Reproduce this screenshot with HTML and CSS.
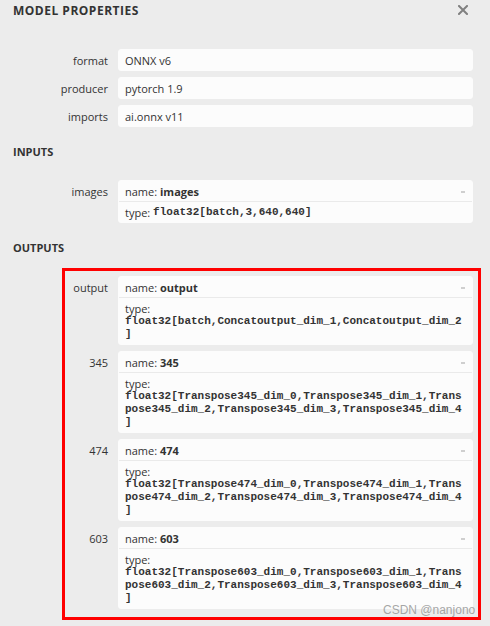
FILE: index.html
```html
<!DOCTYPE html>
<html>
<head>
<meta charset="utf-8">
<link rel="stylesheet" href="styles.css">
</head>
<body>
<div class="sidebar">
  <div class="header">
    <div class="title">MODEL PROPERTIES</div>
    <svg class="close" width="10" height="10" viewBox="0 0 10 10"><path d="M1 1L9 9M9 1L1 9" stroke="#808080" stroke-width="2" stroke-linecap="square"/></svg>
  </div>
  <div class="list props">
    <div class="item"><div class="label">format</div><div class="value"><div class="line">ONNX v6</div></div></div>
    <div class="item"><div class="label">producer</div><div class="value"><div class="line">pytorch 1.9</div></div></div>
    <div class="item"><div class="label">imports</div><div class="value"><div class="line">ai.onnx v11</div></div></div>
  </div>
  <div class="section-title">INPUTS</div>
  <div class="list">
    <div class="item"><div class="label">images</div><div class="value"><div class="line name"><span>name: <b>images</b></span><span class="toggle"></span></div><div class="line sep">type: <code>float32[batch,3,640,640]</code></div></div></div>
  </div>
  <div class="section-title">OUTPUTS</div>
  <div class="list">
    <div class="item"><div class="label">output</div><div class="value"><div class="line name"><span>name: <b>output</b></span><span class="toggle"></span></div><div class="line sep">type: <code>float32[batch,Concatoutput_dim_1,Concatoutput_dim_2]</code></div></div></div>
    <div class="item"><div class="label">345</div><div class="value"><div class="line name"><span>name: <b>345</b></span><span class="toggle"></span></div><div class="line sep">type: <code>float32[Transpose345_dim_0,Transpose345_dim_1,Transpose345_dim_2,Transpose345_dim_3,Transpose345_dim_4]</code></div></div></div>
    <div class="item"><div class="label">474</div><div class="value"><div class="line name"><span>name: <b>474</b></span><span class="toggle"></span></div><div class="line sep">type: <code>float32[Transpose474_dim_0,Transpose474_dim_1,Transpose474_dim_2,Transpose474_dim_3,Transpose474_dim_4]</code></div></div></div>
    <div class="item"><div class="label">603</div><div class="value"><div class="line name"><span>name: <b>603</b></span><span class="toggle"></span></div><div class="line sep">type: <code>float32[Transpose603_dim_0,Transpose603_dim_1,Transpose603_dim_2,Transpose603_dim_3,Transpose603_dim_4]</code></div></div></div>
  </div>
</div>
<div class="annotation"></div>
<div class="watermark">CSDN @nanjono</div>
</body>
</html>
```
FILE: styles.css
```css
html, body {
  margin: 0;
  background: #ececec;
}
body {
  font-family: "Open Sans", "Noto Sans", sans-serif;
  font-size: 11px;
  color: #333;
  position: relative;
  width: 490px;
  height: 626px;
  overflow: hidden;
}
.header {
  display: flex;
  justify-content: space-between;
  align-items: flex-start;
  padding: 3px 22px 0 13px;
  height: 16px;
}
.title {
  font-weight: bold;
  font-size: 12px;
  line-height: 16px;
  letter-spacing: 0.5px;
  color: #333;
}
.close {
  margin-top: 2px;
}
.props {
  margin-top: 30px;
}
.list {
  display: flex;
  flex-direction: column;
  gap: 6px;
  padding-left: 13px;
}
.item {
  display: grid;
  grid-template-columns: 95px 355px;
  column-gap: 10px;
  align-items: start;
}
.label {
  text-align: right;
  padding-top: 5px;
  line-height: 13px;
  color: #333;
}
.value {
  background: #fcfcfc;
  border: 1px solid #fcfcfc;
  border-radius: 3px;
  color: #333;
}
.line {
  padding: 4px 6px 3px;
  line-height: 13px;
}
.name {
  display: flex;
  justify-content: space-between;
  align-items: center;
}
.toggle {
  width: 4px;
  height: 2px;
  background: #cfcfcf;
  margin-right: 1px;
}
.sep {
  border-top: 1px solid #eaeaea;
}
code {
  font-family: "Liberation Mono", monospace;
  font-size: 11px;
  font-weight: bold;
  line-height: 13px;
  display: inline-block;
  word-break: break-all;
  line-break: anywhere;
  vertical-align: top;
  color: #333;
}
.section-title {
  font-weight: bold;
  font-size: 11px;
  line-height: 13px;
  padding-left: 13px;
  margin: 18px 0 22px;
  color: #333;
}
.annotation {
  position: absolute;
  left: 62px;
  top: 268px;
  width: 419px;
  height: 352px;
  box-sizing: border-box;
  border: 3px solid #ff0000;
}
.watermark {
  position: absolute;
  left: 383px;
  top: 603px;
  font-family: "Liberation Sans", sans-serif;
  font-size: 12px;
  line-height: 14px;
  color: rgba(150, 150, 150, 0.85);
}
```
